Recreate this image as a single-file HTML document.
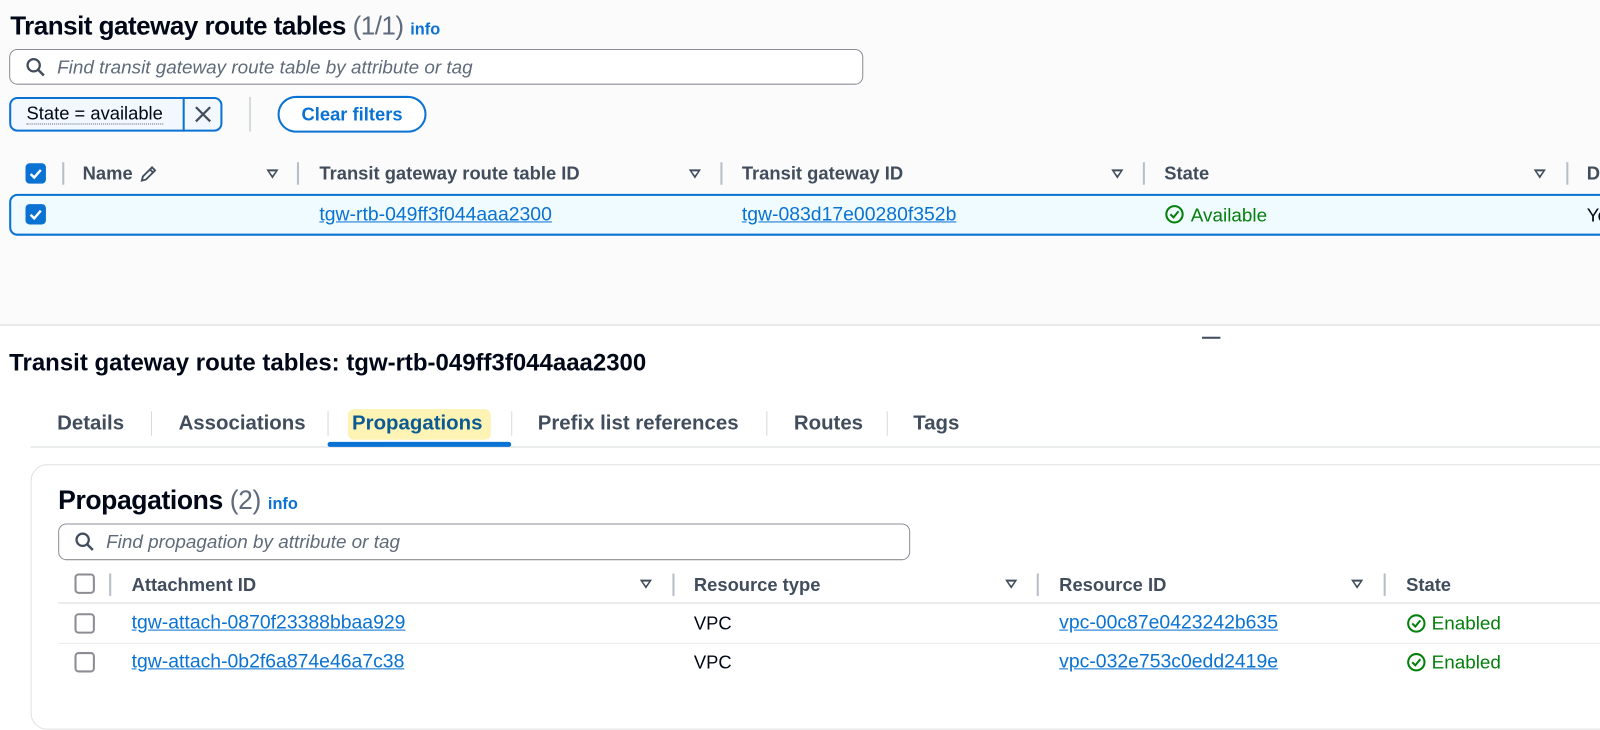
<!DOCTYPE html>
<html><head><meta charset="utf-8"><style>
*{box-sizing:border-box;margin:0;padding:0}
body{width:1600px;height:688px;overflow:hidden;background:#fff;font-family:"Liberation Sans",sans-serif;color:#000716;position:relative}
#w{position:absolute;left:0;top:0;width:1600px;height:688px;transform:scale(1.0204);transform-origin:0 0}
.a{position:absolute;white-space:nowrap}
.t{position:absolute;white-space:nowrap;line-height:20px}
.top{position:absolute;left:0;top:0;width:1620px;height:319px;background:#fbfbfb;border-bottom:1px solid #d5d5d5}
.h{font-weight:bold;font-size:18px;color:#414d5c}
.lk{color:#0972d3;text-decoration:underline;font-size:19px}
.sep{position:absolute;width:2px;background:#b6bec9}
.cb{position:absolute;width:20px;height:20px;border-radius:4px}
.cbon{background:#0972d3}
.cboff{border:2px solid #8c8c94;background:#fff}
.tri{position:absolute;width:0;height:0;border-left:6px solid transparent;border-right:6px solid transparent;border-top:9px solid #414d5c}
.tri:after{content:"";position:absolute;left:-3px;top:-7px;border-left:3px solid transparent;border-right:3px solid transparent;border-top:4px solid #fff}
.grn{color:#037f0c;font-size:18.5px}
.tab{font-weight:bold;font-size:20px;color:#414d5c}
</style></head><body><div id="w">
<div class="top"></div>
<div class="t" style="left:10px;top:12px;font-size:25.5px;font-weight:bold;line-height:28px;letter-spacing:-0.5px">Transit gateway route tables <span style="font-weight:normal;color:#5f6b7a">(1/1)</span> <span style="color:#0972d3;font-size:16px;letter-spacing:0">info</span></div>
<div class="a" style="left:9px;top:48px;width:837px;height:35px;border:1px solid #8c8c94;border-radius:8px;background:#fff"></div>
<svg class="a" style="left:25px;top:56px" width="20" height="20" viewBox="0 0 20 20"><circle cx="8" cy="8" r="6" fill="none" stroke="#414d5c" stroke-width="2.2"/><path d="M12.5 12.5L18 18" stroke="#414d5c" stroke-width="2.4"/></svg>
<div class="t" style="left:56px;top:56px;font-size:18.5px;font-style:italic;color:#5f6b7a">Find transit gateway route table by attribute or tag</div>
<div class="a" style="left:9px;top:95px;width:209px;height:34px;border:2px solid #0972d3;border-radius:8px;background:#f2f8fd"></div>
<div class="a" style="left:179px;top:95px;width:2px;height:34px;background:#0972d3"></div>
<div class="t" style="left:26px;top:102px;font-size:18px;border-bottom:1px dotted #5f6b7a;line-height:19px">State = available</div>
<svg class="a" style="left:189px;top:102px" width="20" height="20"><path d="M3 3L17 17M17 3L3 17" stroke="#414d5c" stroke-width="2.2"/></svg>
<div class="a" style="left:244px;top:95px;width:2px;height:34px;background:#d5dbdb"></div>
<div class="a" style="left:272px;top:94px;width:146px;height:36px;border:2px solid #0972d3;border-radius:20px;background:#fff"></div>
<div class="t" style="left:272px;top:102px;width:146px;text-align:center;font-weight:bold;font-size:18px;color:#0972d3">Clear filters</div>

<div class="cb cbon" style="left:25px;top:160px"></div>
<svg class="a" style="left:25px;top:160px" width="20" height="20"><path d="M5 10.5L8.5 14L15 6.5" fill="none" stroke="#fff" stroke-width="2.4"/></svg>
<div class="sep" style="left:61px;top:159px;height:22px"></div>
<div class="t h" style="left:81px;top:160px">Name</div>
<svg class="a" style="left:136px;top:160px" width="20" height="20"><path d="M3 17L4 13L13 4L16 7L7 16Z M11 6L14 9" fill="none" stroke="#414d5c" stroke-width="1.8"/></svg>
<div class="tri" style="left:261px;top:166px"></div>
<div class="sep" style="left:291px;top:159px;height:22px"></div>
<div class="t h" style="left:313px;top:160px">Transit gateway route table ID</div>
<div class="tri" style="left:675px;top:166px"></div>
<div class="sep" style="left:706px;top:159px;height:22px"></div>
<div class="t h" style="left:727px;top:160px">Transit gateway ID</div>
<div class="tri" style="left:1089px;top:166px"></div>
<div class="sep" style="left:1120px;top:159px;height:22px"></div>
<div class="t h" style="left:1141px;top:160px">State</div>
<div class="tri" style="left:1503px;top:166px"></div>
<div class="sep" style="left:1535px;top:159px;height:22px"></div>
<div class="t h" style="left:1555px;top:160px">D</div>

<div class="a" style="left:9px;top:190px;width:1620px;height:41px;border:2px solid #0972d3;border-radius:8px;background:#f0fbff"></div>
<div class="cb cbon" style="left:25px;top:200px"></div>
<svg class="a" style="left:25px;top:200px" width="20" height="20"><path d="M5 10.5L8.5 14L15 6.5" fill="none" stroke="#fff" stroke-width="2.4"/></svg>
<div class="t lk" style="left:313px;top:201px">tgw-rtb-049ff3f044aaa2300</div>
<div class="t lk" style="left:727px;top:201px">tgw-083d17e00280f352b</div>
<svg class="a" style="left:1141px;top:200px" width="20" height="20"><circle cx="10" cy="10" r="8" fill="none" stroke="#037f0c" stroke-width="2"/><path d="M6 10L9 13L14 7" fill="none" stroke="#037f0c" stroke-width="2"/></svg>
<div class="t grn" style="left:1167px;top:201px">Available</div>
<div class="t" style="left:1555px;top:201px;font-size:18.5px">Yo</div>

<div class="a" style="left:1178px;top:330px;width:18px;height:2px;background:#414d5c"></div>
<div class="t" style="left:9px;top:343px;font-size:23.5px;font-weight:bold;line-height:24px">Transit gateway route tables: tgw-rtb-049ff3f044aaa2300</div>

<div class="a" style="left:30px;top:437px;width:1570px;height:2px;background:#e9ebed"></div>
<div class="t tab" style="left:56px;top:405px">Details</div>
<div class="a" style="left:148px;top:403px;width:1px;height:24px;background:#d5dbdb"></div>
<div class="t tab" style="left:175px;top:405px">Associations</div>
<div class="a" style="left:321px;top:403px;width:1px;height:24px;background:#d5dbdb"></div>
<div class="a" style="left:341px;top:401px;width:140px;height:30px;background:#fcf3b4;border-radius:6px"></div>
<div class="t tab" style="left:345px;top:405px;color:#0a5b93">Propagations</div>
<div class="a" style="left:321px;top:433px;width:180px;height:5px;background:#0972d3;border-radius:3px"></div>
<div class="a" style="left:501px;top:403px;width:1px;height:24px;background:#d5dbdb"></div>
<div class="t tab" style="left:527px;top:405px">Prefix list references</div>
<div class="a" style="left:751px;top:403px;width:1px;height:24px;background:#d5dbdb"></div>
<div class="t tab" style="left:778px;top:405px">Routes</div>
<div class="a" style="left:869px;top:403px;width:1px;height:24px;background:#d5dbdb"></div>
<div class="t tab" style="left:895px;top:405px">Tags</div>

<div class="a" style="left:30px;top:455px;width:1600px;height:260px;border:1px solid #e0e0e0;border-radius:16px;background:#fff"></div>
<div class="t" style="left:57px;top:476px;font-size:26px;font-weight:bold;line-height:28px;letter-spacing:-0.4px">Propagations <span style="font-weight:normal;color:#5f6b7a">(2)</span> <span style="color:#0972d3;font-size:16px;letter-spacing:0">info</span></div>
<div class="a" style="left:57px;top:513px;width:835px;height:36px;border:1px solid #8c8c94;border-radius:8px"></div>
<svg class="a" style="left:73px;top:521px" width="20" height="20" viewBox="0 0 20 20"><circle cx="8" cy="8" r="6" fill="none" stroke="#414d5c" stroke-width="2.2"/><path d="M12.5 12.5L18 18" stroke="#414d5c" stroke-width="2.4"/></svg>
<div class="t" style="left:104px;top:521px;font-size:18.5px;font-style:italic;color:#5f6b7a">Find propagation by attribute or tag</div>

<div class="cb cboff" style="left:73px;top:562px"></div>
<div class="sep" style="left:107px;top:562px;height:22px"></div>
<div class="t h" style="left:129px;top:563px">Attachment ID</div>
<div class="tri" style="left:627px;top:568px"></div>
<div class="sep" style="left:659px;top:562px;height:22px"></div>
<div class="t h" style="left:680px;top:563px">Resource type</div>
<div class="tri" style="left:985px;top:568px"></div>
<div class="sep" style="left:1016px;top:562px;height:22px"></div>
<div class="t h" style="left:1038px;top:563px">Resource ID</div>
<div class="tri" style="left:1324px;top:568px"></div>
<div class="sep" style="left:1356px;top:562px;height:22px"></div>
<div class="t h" style="left:1378px;top:563px">State</div>
<div class="a" style="left:57px;top:590px;width:1543px;height:2px;background:#e9ebed"></div>

<div class="cb cboff" style="left:73px;top:601px"></div>
<div class="t lk" style="left:129px;top:601px">tgw-attach-0870f23388bbaa929</div>
<div class="t" style="left:680px;top:601px;font-size:18px">VPC</div>
<div class="t lk" style="left:1038px;top:601px">vpc-00c87e0423242b635</div>
<svg class="a" style="left:1378px;top:601px" width="20" height="20"><circle cx="10" cy="10" r="8" fill="none" stroke="#037f0c" stroke-width="2"/><path d="M6 10L9 13L14 7" fill="none" stroke="#037f0c" stroke-width="2"/></svg>
<div class="t grn" style="left:1403px;top:601px">Enabled</div>
<div class="a" style="left:57px;top:630px;width:1543px;height:1px;background:#e9ebed"></div>

<div class="cb cboff" style="left:73px;top:639px"></div>
<div class="t lk" style="left:129px;top:639px">tgw-attach-0b2f6a874e46a7c38</div>
<div class="t" style="left:680px;top:639px;font-size:18px">VPC</div>
<div class="t lk" style="left:1038px;top:639px">vpc-032e753c0edd2419e</div>
<svg class="a" style="left:1378px;top:639px" width="20" height="20"><circle cx="10" cy="10" r="8" fill="none" stroke="#037f0c" stroke-width="2"/><path d="M6 10L9 13L14 7" fill="none" stroke="#037f0c" stroke-width="2"/></svg>
<div class="t grn" style="left:1403px;top:639px">Enabled</div>
</div></body></html>
